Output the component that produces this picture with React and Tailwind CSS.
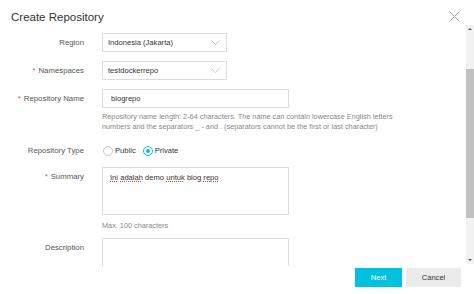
import React from "react";

const FONT = { fontFamily: '"Liberation Sans", Arial, sans-serif' };

const Req = () => <span className="mr-[3px] text-[7px] text-[#e4393c]">*</span>;

const Label = ({ children, required, top }) => (
  <div
    className={
      "w-[84px] shrink-0 text-right text-[7.8px] leading-[10px] text-[#555] " +
      (top ? "pt-[5px]" : "self-center")
    }
  >
    {required && <Req />}
    {children}
  </div>
);

const Chevron = () => (
  <svg width="9" height="5" viewBox="0 0 9 5" className="shrink-0">
    <path d="M0.5 0.5 L4.5 4.5 L8.5 0.5" fill="none" stroke="#b5b5b5" strokeWidth="0.8" />
  </svg>
);

const Select = ({ value }) => (
  <div className="ml-[18px] flex h-[19px] w-[125px] items-center justify-between border border-[#dcdcdc] pl-[5px] pr-[6px] text-[7.6px] text-[#333]">
    <span>{value}</span>
    <Chevron />
  </div>
);

const Squiggle = ({ children }) => (
  <span className="underline decoration-dotted decoration-[#e4393c] decoration-1 underline-offset-[1px]">
    {children}
  </span>
);

const Radio = ({ checked, label }) => (
  <div className="flex items-center gap-[2px]">
    <div
      className={
        "flex h-[10px] w-[10px] items-center justify-center rounded-full border " +
        (checked ? "border-[#00c1de]" : "border-[#c8c8c8]")
      }
    >
      {checked && <div className="h-[4px] w-[4px] rounded-full bg-[#00c1de]" />}
    </div>
    <span className="text-[7.6px] text-[#333]">{label}</span>
  </div>
);

export default function App() {
  return (
    <div className="flex h-[294px] w-[474px] flex-col overflow-hidden bg-white" style={FONT}>
      {/* header */}
      <div className="flex h-[25px] shrink-0 items-start justify-between pl-[11px] pr-[14px] pt-[10px]">
        <h1 className="text-[11.5px] leading-[14px] text-[#333]">Create Repository</h1>
        <svg width="11" height="11" viewBox="0 0 11 11" className="mt-[1px]">
          <path d="M0.5 0.5 L10.5 10.5 M10.5 0.5 L0.5 10.5" stroke="#aaa" strokeWidth="1" />
        </svg>
      </div>

      {/* body */}
      <div className="flex h-[241px] shrink-0">
        <div className="flex-1 overflow-hidden">
          <div className="mt-[8px] flex">
            <Label>Region</Label>
            <Select value="Indonesia (Jakarta)" />
          </div>
          <div className="mt-[9px] flex">
            <Label required>Namespaces</Label>
            <Select value="testdockerrepo" />
          </div>
          <div className="mt-[9px] flex">
            <Label required>Repository Name</Label>
            <div className="ml-[18px] flex h-[19px] w-[187px] items-center border border-[#dcdcdc] pl-[8px] text-[7.6px] text-[#333]">
              blogrepo
            </div>
          </div>
          <div className="ml-[102px] mt-[4px] text-[7.3px] leading-[10px] text-[#888]">
            <p>Repository name length: 2-64 characters. The name can contain lowercase English letters</p>
            <p>numbers and the separators _ - and . (separators cannot be the first or last character)</p>
          </div>
          <div className="mt-[12px] flex h-[14px]">
            <Label>Repository Type</Label>
            <div className="ml-[19px] flex items-center gap-[7px]">
              <Radio label="Public" />
              <Radio checked label="Private" />
            </div>
          </div>
          <div className="mt-[9px] flex">
            <Label required top>
              Summary
            </Label>
            <div className="ml-[18px] h-[48px] w-[187px] border border-[#dcdcdc] pl-[7px] pt-[5px] text-[7.6px] leading-[10px] text-[#333]">
              <Squiggle>Ini</Squiggle> <Squiggle>adalah</Squiggle> demo <Squiggle>untuk</Squiggle> blog{" "}
              <Squiggle>repo</Squiggle>
            </div>
          </div>
          <div className="ml-[102px] mt-[6px] text-[7.3px] leading-[10px] text-[#888]">Max. 100 characters</div>
          <div className="mt-[7px] flex">
            <Label top>Description</Label>
            <div className="ml-[18px] h-[48px] w-[187px] border border-[#dcdcdc]" />
          </div>
        </div>

        {/* scrollbar */}
        <div className="flex h-[239px] w-[8px] flex-col items-center bg-[#f1f1f1]">
          <div className="mt-[3px] h-0 w-0 border-x-[2px] border-b-[2px] border-x-transparent border-b-[#555]" />
          <div className="mt-[39px] h-[149px] w-full bg-[#c1c1c1]" />
          <div className="mt-auto mb-[3px] h-0 w-0 border-x-[2px] border-t-[2px] border-x-transparent border-t-[#555]" />
        </div>
      </div>

      {/* footer */}
      <div className="flex flex-1 justify-end gap-[4px] pr-[13px] pt-[2px]">
        <button className="h-[19px] w-[47px] bg-[#00c1de] text-[7.6px] text-white">Next</button>
        <button className="h-[19px] w-[55px] bg-[#ebebeb] text-[7.6px] text-[#333]">Cancel</button>
      </div>
    </div>
  );
}
